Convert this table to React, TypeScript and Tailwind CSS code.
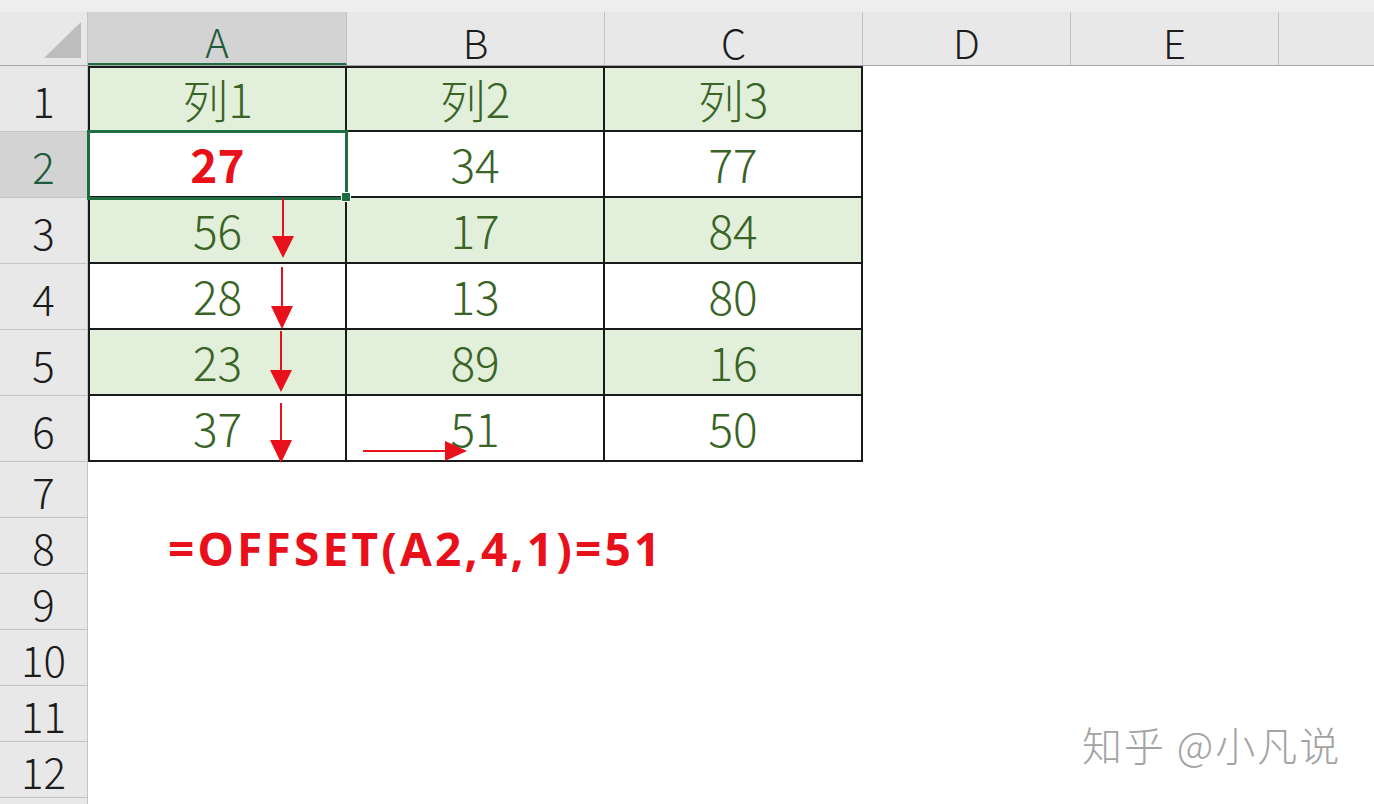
const FONT = '"Noto Sans CJK SC", "Noto Sans", sans-serif';

const cols = ['A', 'B', 'C', 'D', 'E'];

const tableRows: { cells: string[]; shaded: boolean }[] = [
  { cells: ['列1', '列2', '列3'], shaded: true },
  { cells: ['27', '34', '77'], shaded: false },
  { cells: ['56', '17', '84'], shaded: true },
  { cells: ['28', '13', '80'], shaded: false },
  { cells: ['23', '89', '16'], shaded: true },
  { cells: ['37', '51', '50'], shaded: false },
];

const colWidths = ['w-[259px]', 'w-[258px]', 'w-[258px]'];

function RowHeader({ label, tall, active }: { label: string; tall?: boolean; active?: boolean }) {
  return (
    <div
      className={`w-[88px] shrink-0 flex items-center justify-center border-b border-r border-[#c3c3c3] text-[42px] font-light leading-none ${
        tall ? 'h-[66px]' : 'h-[56px]'
      } ${active ? 'bg-[#d3d3d3] text-[#1e5b3c]' : 'bg-[#e8e8e8] text-[#1c1c1c]'}`}
    >
      <span className="pt-[2px]">{label}</span>
    </div>
  );
}

function Arrows() {
  const red = '#e8101a';
  return (
    <svg className="absolute left-0 top-0 pointer-events-none" width={1374} height={804}>
      <line x1={283} y1={198} x2={283} y2={240} stroke={red} strokeWidth={2} />
      <polygon points="272,236 294,236 283,258" fill={red} />
      <line x1={282} y1={267} x2={282} y2={308} stroke={red} strokeWidth={2} />
      <polygon points="271,306 293,306 282,329" fill={red} />
      <line x1={281} y1={331} x2={281} y2={372} stroke={red} strokeWidth={2} />
      <polygon points="270,370 292,370 281,392" fill={red} />
      <line x1={281} y1={403} x2={281} y2={442} stroke={red} strokeWidth={2} />
      <polygon points="270,440 292,440 281,463" fill={red} />
      <line x1={363} y1={451} x2={447} y2={451} stroke={red} strokeWidth={2} />
      <polygon points="445,441 445,461 467,451" fill={red} />
    </svg>
  );
}

export default function App() {
  return (
    <div
      className="relative w-[1374px] h-[804px] overflow-hidden bg-white"
      style={{ fontFamily: FONT }}
    >
      {/* top strip */}
      <div className="h-[12px] bg-[#eeeeee]" />

      {/* column headers */}
      <div className="flex h-[54px] bg-[#e8e8e8] border-b border-[#a6a6a6]">
        <div className="relative w-[88px] shrink-0 border-r border-[#c3c3c3]">
          <svg className="absolute left-0 top-0" width={88} height={54}>
            <polygon points="44,46 81,46 81,10" fill="#bdbdbd" />
          </svg>
        </div>
        {cols.map((c, i) => (
          <div
            key={c}
            className={`shrink-0 flex items-center justify-center border-r border-[#c3c3c3] text-[40px] font-light leading-none ${
              i < 3 ? colWidths[i] : 'w-[208px]'
            } ${i === 0 ? 'bg-[#d3d3d3] text-[#1e5b3c] border-b-2 border-b-[#1e6e43]' : 'text-[#1c1c1c]'}`}
          >
            <span className="pt-[6px]">{c}</span>
          </div>
        ))}
        <div className="flex-1" />
      </div>

      {/* table rows */}
      {tableRows.map((row, r) => (
        <div key={r} className="flex h-[66px]">
          <RowHeader label={String(r + 1)} tall active={r === 1} />
          {row.cells.map((v, i) => (
            <div
              key={i}
              className={`shrink-0 flex items-center justify-center border-r-2 border-b-2 border-[#1a1a1a] text-[46px] leading-none ${
                colWidths[i]
              } ${i === 0 ? 'border-l-2' : ''} ${r === 0 ? 'border-t-2' : ''} ${
                row.shaded ? 'bg-[#e2efda]' : 'bg-white'
              } ${r === 1 && i === 0 ? 'text-[#e8101a] font-bold' : 'text-[#3a6426] font-light'}`}
            >
              <span className="pb-[2px]">{v}</span>
            </div>
          ))}
          <div className="flex-1" />
        </div>
      ))}

      {/* empty rows */}
      {['7', '8', '9', '10', '11', '12', ''].map((n, k) => (
        <div key={k} className="flex h-[56px]">
          <RowHeader label={n} />
          {n === '8' && (
            <div
              className="flex items-center pl-[80px] pt-[4px] text-[46px] font-bold tracking-[3.2px] text-[#e8101a] leading-none"
              style={{ fontFamily: '"Noto Sans", sans-serif' }}
            >
              =OFFSET(A2,4,1)=51
            </div>
          )}
        </div>
      ))}

      {/* selected cell A2 */}
      <div className="absolute left-[87px] top-[130px] w-[261px] h-[70px] border-[3px] border-[#1e6e43]" />
      <div className="absolute left-[341px] top-[192px] w-[10px] h-[10px] bg-[#1e6e43] border border-white" />

      <Arrows />

      {/* watermark */}
      <div className="absolute left-[1082px] top-[724px] text-[40px] font-light leading-none text-[#a3a3a3] tracking-[2px]">
        知乎 @小凡说
      </div>
    </div>
  );
}
